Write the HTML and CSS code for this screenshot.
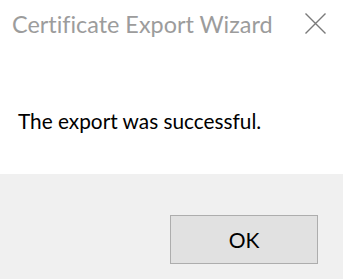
FILE: index.html
```html
<!DOCTYPE html>
<html>
<head>
<meta charset="utf-8">
<link rel="stylesheet" href="styles.css">
</head>
<body>
<div class="dialog">
  <div class="content">
    <div class="titlebar">
      <div class="title">Certificate Export Wizard</div>
      <div class="close">
        <svg width="21" height="21" viewBox="0 0 21 21"><path d="M0.5 0.5 L20.5 20.5 M20.5 0.5 L0.5 20.5" stroke="#7a7a7a" stroke-width="1.4" fill="none"/></svg>
      </div>
    </div>
    <div class="message">The export was successful.</div>
  </div>
  <div class="footer">
    <button class="ok">OK</button>
  </div>
</div>
</body>
</html>
```
FILE: styles.css
```css
html, body {
  margin: 0;
  padding: 0;
  width: 343px;
  height: 279px;
  overflow: hidden;
}
.dialog {
  display: flex;
  flex-direction: column;
  width: 343px;
  height: 279px;
  font-family: "Lato", "Open Sans", sans-serif;
  font-variant-ligatures: none;
}
.content {
  background: #ffffff;
  height: 174px;
  display: flex;
  flex-direction: column;
}
.titlebar {
  display: flex;
  justify-content: space-between;
  align-items: flex-start;
  padding: 9px 17px 0 12px;
}
.title {
  font-size: 23.4px;
  color: #9c9c9c;
  line-height: 30px;
}
.close {
  padding-top: 4px;
  width: 21px;
  height: 21px;
}
.message {
  margin-top: 69px;
  padding-left: 18px;
  font-size: 20.8px;
  color: #000;
  line-height: 26px;
}
.footer {
  flex: 1;
  background: #f0f0f0;
  display: flex;
  justify-content: flex-end;
  align-items: flex-start;
  padding: 41px 25px 0 0;
}
.ok {
  width: 148px;
  height: 49px;
  background: #e1e1e1;
  border: 1px solid #adadad;
  font-family: "Lato", "Open Sans", sans-serif;
  font-size: 21px;
  color: #000;
  padding: 0;
}
```
